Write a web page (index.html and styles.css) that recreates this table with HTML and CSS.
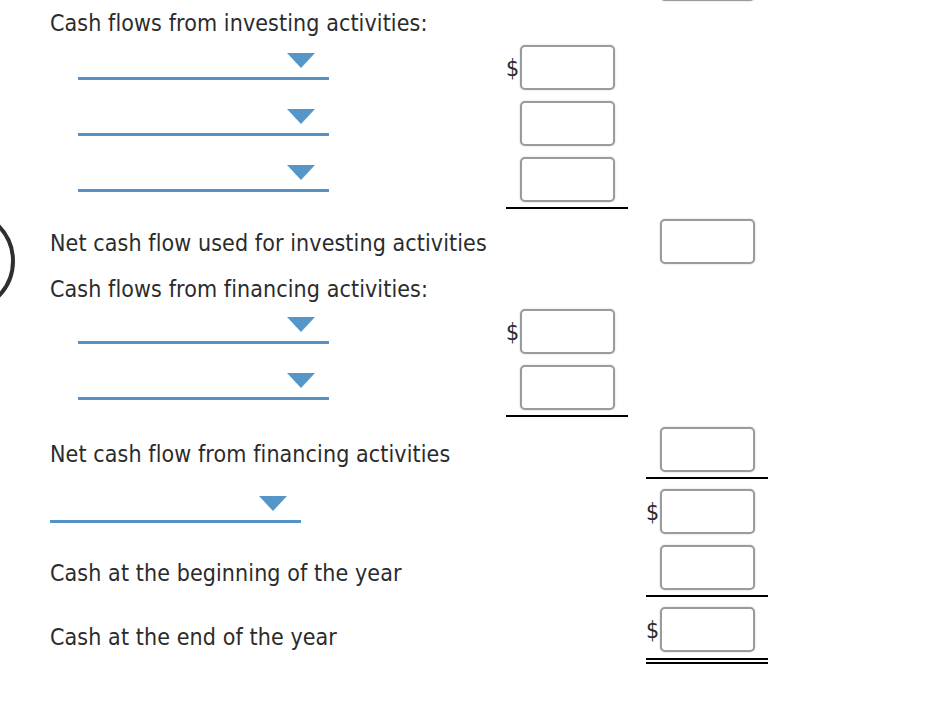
FILE: index.html
```html
<!DOCTYPE html>
<html>
<head>
<meta charset="utf-8">
<link rel="stylesheet" href="styles.css">
</head>
<body>
<div class="ring"></div>
<div class="sheet">
  <div class="row r-head1">
    <div class="label">Cash flows from investing activities:</div>
    <div class="amt"></div>
    <div class="sp"></div>
    <div class="amt top-cut"><span class="box"></span></div>
  </div>

  <div class="row r-std">
    <div class="label"><div class="dd indent"><svg class="tri" viewBox="0 0 28 15"><polygon points="0,0 28,0 14,15"/></svg></div></div>
    <div class="amt"><span class="cur">$</span><span class="box"></span></div>
    <div class="sp"></div>
    <div class="amt"></div>
  </div>

  <div class="row r-std">
    <div class="label"><div class="dd indent"><svg class="tri" viewBox="0 0 28 15"><polygon points="0,0 28,0 14,15"/></svg></div></div>
    <div class="amt"><span class="box"></span></div>
    <div class="sp"></div>
    <div class="amt"></div>
  </div>

  <div class="row r-std">
    <div class="label"><div class="dd indent"><svg class="tri" viewBox="0 0 28 15"><polygon points="0,0 28,0 14,15"/></svg></div></div>
    <div class="amt rule"><span class="box"></span></div>
    <div class="sp"></div>
    <div class="amt"></div>
  </div>

  <div class="row r-after">
    <div class="label t21">Net cash flow used for investing activities</div>
    <div class="amt"></div>
    <div class="sp"></div>
    <div class="amt"><span class="box"></span></div>
  </div>

  <div class="row r-head2">
    <div class="label">Cash flows from financing activities:</div>
    <div class="amt"></div>
    <div class="sp"></div>
    <div class="amt"></div>
  </div>

  <div class="row r-std">
    <div class="label"><div class="dd indent"><svg class="tri" viewBox="0 0 28 15"><polygon points="0,0 28,0 14,15"/></svg></div></div>
    <div class="amt"><span class="cur">$</span><span class="box"></span></div>
    <div class="sp"></div>
    <div class="amt"></div>
  </div>

  <div class="row r-std">
    <div class="label"><div class="dd indent"><svg class="tri" viewBox="0 0 28 15"><polygon points="0,0 28,0 14,15"/></svg></div></div>
    <div class="amt rule"><span class="box"></span></div>
    <div class="sp"></div>
    <div class="amt"></div>
  </div>

  <div class="row r-after">
    <div class="label t24">Net cash flow from financing activities</div>
    <div class="amt"></div>
    <div class="sp"></div>
    <div class="amt rule"><span class="box"></span></div>
  </div>

  <div class="row r-after">
    <div class="label"><div class="dd dd-j"><svg class="tri" viewBox="0 0 28 15"><polygon points="0,0 28,0 14,15"/></svg></div></div>
    <div class="amt"></div>
    <div class="sp"></div>
    <div class="amt"><span class="cur">$</span><span class="box"></span></div>
  </div>

  <div class="row r-std">
    <div class="label t20">Cash at the beginning of the year</div>
    <div class="amt"></div>
    <div class="sp"></div>
    <div class="amt rule"><span class="box"></span></div>
  </div>

  <div class="row r-after">
    <div class="label t27">Cash at the end of the year</div>
    <div class="amt"></div>
    <div class="sp"></div>
    <div class="amt double"><span class="cur">$</span><span class="box"></span></div>
  </div>
</div>
</body>
</html>
```
FILE: styles.css
```css
html, body {
  margin: 0;
  padding: 0;
  background: #ffffff;
}
body {
  font-family: "DejaVu Sans", Verdana, sans-serif;
  font-stretch: condensed;
  font-size: 23px;
  line-height: 26px;
  letter-spacing: 0.1px;
  color: #2b2b2b;
  overflow: hidden;
}
.ring {
  position: absolute;
  left: -89px;
  top: 209px;
  width: 96px;
  height: 96px;
  border: 4px solid #2f2f2f;
  border-radius: 50%;
}
.sheet {
  display: flex;
  flex-direction: column;
}
.row {
  display: grid;
  grid-template-columns: 506px 122px 18px 122px;
}
.label {
  padding-left: 50px;
  white-space: nowrap;
}
.amt {
  display: flex;
  justify-content: flex-end;
  align-items: center;
  align-self: start;
  padding-right: 13px;
}
.r-std .amt:not(:empty) { padding-top: 5px; padding-bottom: 6px; }
.r-after .amt:not(:empty) { padding-top: 10px; padding-bottom: 6px; }
.r-std .amt.rule, .r-after .amt.rule { padding-bottom: 5px; border-bottom: 2px solid #000; }
.amt.double { padding-bottom: 6px; border-bottom: 6px double #000; }
.r-std { min-height: 56px; }
.r-after { min-height: 61px; }
.r-head1 { height: 40px; }
.r-head1 .label { padding-top: 10px; }
.r-head2 { height: 34px; }
.r-head2 .label { padding-top: 6px; }
.top-cut { align-items: flex-start; }
.top-cut .box { margin-top: -44px; }
.t20 { padding-top: 20px; }
.t21 { padding-top: 21px; }
.t24 { padding-top: 24px; }
.t27 { padding-top: 27px; }
.box {
  display: block;
  box-sizing: border-box;
  width: 95px;
  height: 45px;
  border: 2px solid #9b9b9b;
  border-radius: 5px;
  background: #fff;
  box-shadow: 0 0 2px rgba(0,0,0,0.22);
}
.cur {
  font-size: 23px;
  line-height: 26px;
  margin-right: 1px;
  letter-spacing: 0;
}
.dd {
  box-sizing: content-box;
  width: 237px;
  height: 24px;
  padding-right: 14px;
  margin-top: 13px;
  border-bottom: 3px solid #5592c5;
  display: flex;
  justify-content: flex-end;
  align-items: flex-start;
}
.dd.indent { margin-left: 28px; }
.dd.dd-j { margin-top: 17px; }
.tri {
  width: 28px;
  height: 15px;
  display: block;
  fill: #5596c8;
}
```
